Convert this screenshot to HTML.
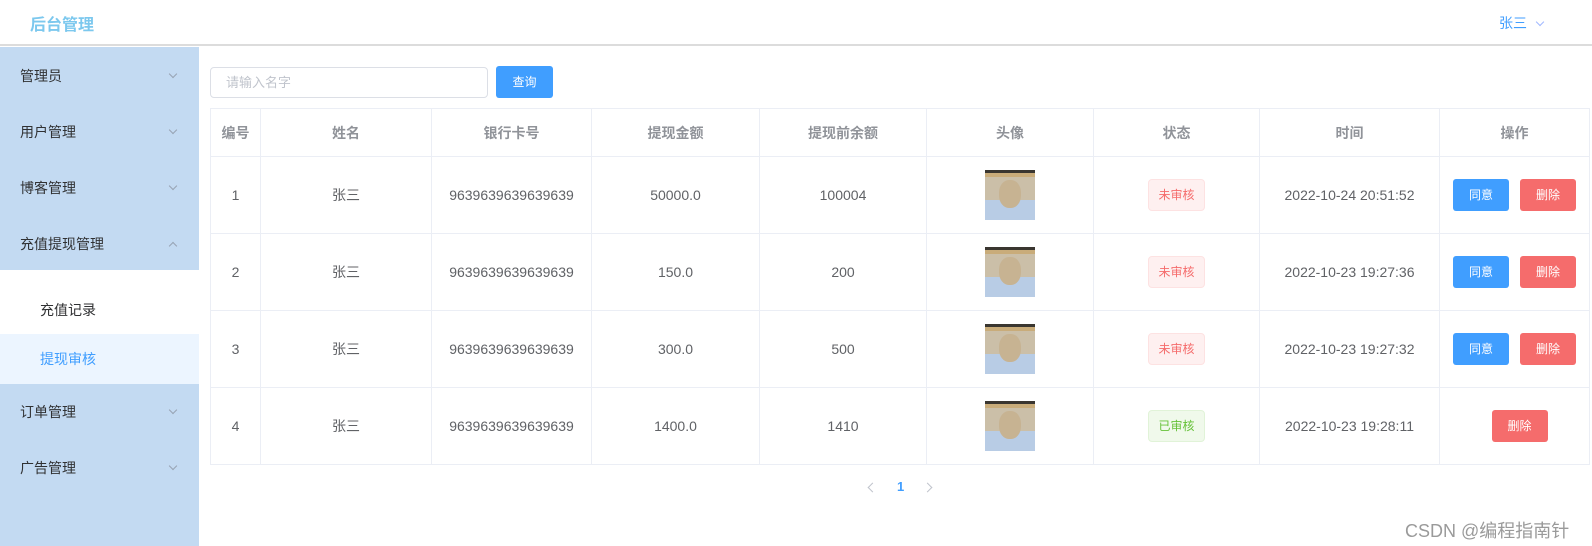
<!DOCTYPE html>
<html><head><meta charset="utf-8"><style>
*{margin:0;padding:0;box-sizing:border-box}
body{width:1592px;height:546px;overflow:hidden;background:#fff;font-family:"Liberation Sans","Noto Sans CJK SC",sans-serif;font-size:14px;color:#606266;position:relative}
.hdr{position:absolute;left:0;top:0;width:1592px;height:46px;border-bottom:2px solid #dcdcdc;background:#fff}
.title{position:absolute;left:30px;top:11px;font-size:16px;font-weight:bold;color:#7cc8ee}
.user{position:absolute;left:1499px;top:13px;color:#409eff;font-size:14px}
.side{position:absolute;left:0;top:47px;width:199px;height:499px;background:#c3daf2}
.mi{position:absolute;left:0;width:199px;height:56px;line-height:56px;padding-left:20px;color:#303133}
.arr{position:absolute;left:170px;top:23px;width:6px;height:6px;border-right:1px solid #97a3b3;border-bottom:1px solid #97a3b3;transform:rotate(45deg)}
.arr.up{transform:rotate(225deg);top:27px}
.sub{position:absolute;left:0;width:199px;padding-left:40px}
.inp{position:absolute;left:210px;top:67px;width:278px;height:31px;border:1px solid #dcdfe6;border-radius:4px;color:#c0c4cc;font-size:13px;line-height:29px;padding-left:15px}
.btn{position:absolute;height:32px;line-height:32px;text-align:center;color:#fff;font-size:12px;border-radius:3px;width:56px}
.blue{background:#409eff}.red{background:#f56c6c}
table{position:absolute;left:210px;top:108px;border-collapse:collapse;table-layout:fixed}
td,th{border:1px solid #ebeef5;text-align:center;font-size:14px;position:relative}
th{height:48px;color:#909399;font-weight:bold}
td{height:77px}
.img{display:inline-block;width:50px;height:50px;vertical-align:middle;background:linear-gradient(180deg,#3a3630 0 6%,#c9ac7a 6% 14%,#cbbfa8 14% 60%,#b8cce5 60% 100%);position:relative}
.img:after{content:"";position:absolute;left:14px;top:10px;width:22px;height:28px;border-radius:45%;background:#c7b392}
.tag{display:inline-block;width:57px;height:32px;line-height:30px;border-radius:4px;font-size:12px;border:1px solid #fde2e2;background:#fef0f0;color:#f56c6c}
.tag.g{border-color:#e1f3d8;background:#f0f9eb;color:#67c23a}
.ops{display:flex;justify-content:center;gap:11px}
.ops span{position:static;display:inline-block}
</style></head><body>
<div class="hdr"><div class="title">后台管理</div><div class="user">张三 <span style="display:inline-block;width:6px;height:6px;border-right:1px solid #a0b8ff;border-bottom:1px solid #a0b8ff;transform:rotate(45deg);margin-left:6px;position:relative;top:-3px"></span></div></div>
<div class="side">
<div class="mi" style="top:1px">管理员<i class="arr"></i></div>
<div class="mi" style="top:57px">用户管理<i class="arr"></i></div>
<div class="mi" style="top:113px">博客管理<i class="arr"></i></div>
<div class="mi" style="top:169px">充值提现管理<i class="arr up"></i></div>
<div class="sub" style="top:223px;height:64px;background:#fff;line-height:80px;color:#303133">充值记录</div>
<div class="sub" style="top:287px;height:50px;background:#ecf5ff;line-height:50px;color:#409eff">提现审核</div>
<div class="mi" style="top:337px">订单管理<i class="arr"></i></div>
<div class="mi" style="top:393px">广告管理<i class="arr"></i></div>
</div>
<div class="inp">请输入名字</div>
<div class="btn blue" style="left:496px;top:66px;width:57px">查询</div>
<table>
<colgroup><col style="width:50px"><col style="width:171px"><col style="width:160px"><col style="width:168px"><col style="width:167px"><col style="width:167px"><col style="width:166px"><col style="width:180px"><col style="width:150px"></colgroup>
<tr><th>编号</th><th>姓名</th><th>银行卡号</th><th>提现金额</th><th>提现前余额</th><th>头像</th><th>状态</th><th>时间</th><th>操作</th></tr>
<tr><td>1</td><td>张三</td><td>9639639639639639</td><td>50000.0</td><td>100004</td><td><span class="img"></span></td><td><span class="tag">未审核</span></td><td>2022-10-24 20:51:52</td><td><div class="ops"><span class="btn blue">同意</span><span class="btn red">删除</span></div></td></tr>
<tr><td>2</td><td>张三</td><td>9639639639639639</td><td>150.0</td><td>200</td><td><span class="img"></span></td><td><span class="tag">未审核</span></td><td>2022-10-23 19:27:36</td><td><div class="ops"><span class="btn blue">同意</span><span class="btn red">删除</span></div></td></tr>
<tr><td>3</td><td>张三</td><td>9639639639639639</td><td>300.0</td><td>500</td><td><span class="img"></span></td><td><span class="tag">未审核</span></td><td>2022-10-23 19:27:32</td><td><div class="ops"><span class="btn blue">同意</span><span class="btn red">删除</span></div></td></tr>
<tr><td>4</td><td>张三</td><td>9639639639639639</td><td>1400.0</td><td>1410</td><td><span class="img"></span></td><td><span class="tag g">已审核</span></td><td>2022-10-23 19:28:11</td><td><div class="ops" style="padding-left:10px"><span class="btn red">删除</span></div></td></tr>
</table>
<div style="position:absolute;left:869px;top:484px;width:7px;height:7px;border-left:1px solid #c0c4cc;border-bottom:1px solid #c0c4cc;transform:rotate(45deg)"></div>
<div style="position:absolute;left:897px;top:479px;color:#409eff;font-size:13px;font-weight:bold">1</div>
<div style="position:absolute;left:924px;top:484px;width:7px;height:7px;border-right:1px solid #c0c4cc;border-top:1px solid #c0c4cc;transform:rotate(45deg)"></div>
<div style="position:absolute;left:1405px;top:517px;font-size:18px;color:#9a9a9a">CSDN @编程指南针</div>
</body></html>
